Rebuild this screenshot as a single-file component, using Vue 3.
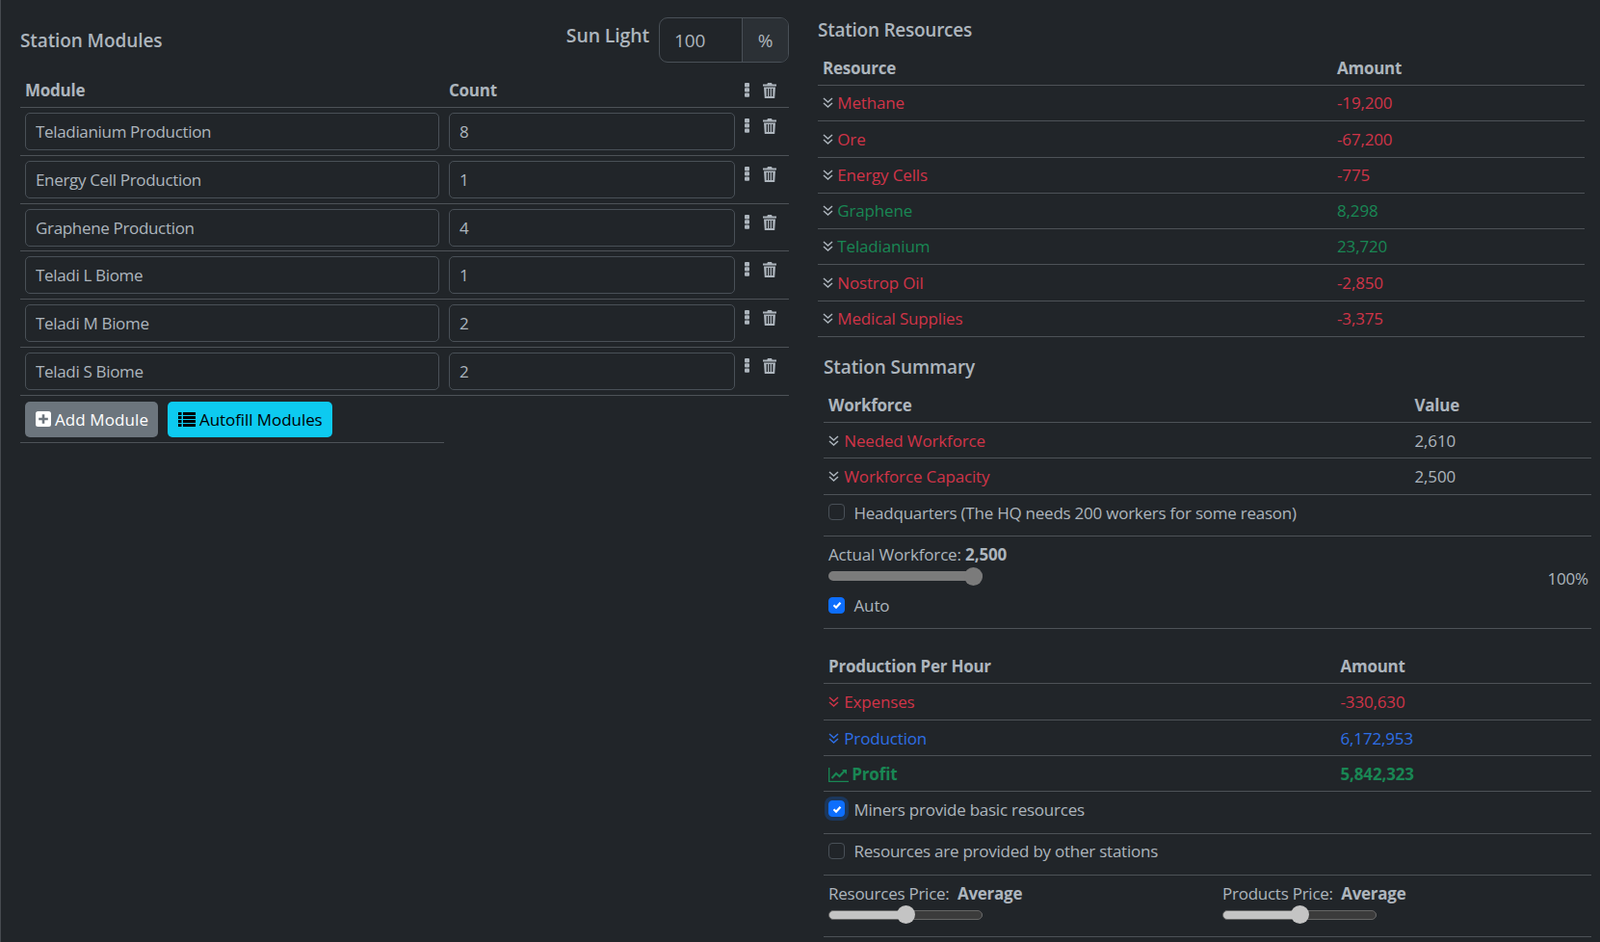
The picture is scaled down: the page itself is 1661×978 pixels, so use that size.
<script setup>
const modules = [
  { name: 'Teladianium Production', count: 8 },
  { name: 'Energy Cell Production', count: 1 },
  { name: 'Graphene Production', count: 4 },
  { name: 'Teladi L Biome', count: 1 },
  { name: 'Teladi M Biome', count: 2 },
  { name: 'Teladi S Biome', count: 2 },
]
const resources = [
  { name: 'Methane', amount: '-19,200', tone: 'red' },
  { name: 'Ore', amount: '-67,200', tone: 'red' },
  { name: 'Energy Cells', amount: '-775', tone: 'red' },
  { name: 'Graphene', amount: '8,298', tone: 'green' },
  { name: 'Teladianium', amount: '23,720', tone: 'green' },
  { name: 'Nostrop Oil', amount: '-2,850', tone: 'red' },
  { name: 'Medical Supplies', amount: '-3,375', tone: 'red' },
]
</script>

<template>
  <div class="page">
    <section class="left">
      <div class="left-head">
        <h5 class="title">Station Modules</h5>
        <div class="sun">
          <label class="sun-label">Sun Light</label>
          <div class="group">
            <input class="group-input" readonly value="100" />
            <span class="group-unit">%</span>
          </div>
        </div>
      </div>
      <table class="table modules">
        <thead>
          <tr class="row-head">
            <th class="c-module">Module</th>
            <th class="c-count">Count</th>
            <th class="c-actions">
              <div class="actions">
                <svg class="dots" viewBox="0 0 5 15" width="5" height="15"><rect width="5" height="4.4" y="0" rx="1" /><rect width="5" height="4.4" y="5.2" rx="1" /><rect width="5" height="4.4" y="10.4" rx="1" /></svg>
                <svg class="trash" viewBox="0 0 14 16" width="14" height="16"><path d="M5 0h4l.7 1.6H14v1.8H0V1.6h4.3zM1 4.4h12L12.2 16H1.8zM3.7 6v8h1.3V6zm2.6 0v8h1.4V6zM9 6v8h1.3V6z" fill-rule="evenodd" /></svg>
              </div>
            </th>
          </tr>
        </thead>
        <tbody>
          <tr v-for="m in modules" :key="m.name" class="row-module">
            <td class="cell-input"><input class="field" readonly :value="m.name" /></td>
            <td class="cell-input"><input class="field" readonly :value="m.count" /></td>
            <td class="cell-actions">
              <div class="actions">
                <svg class="dots" viewBox="0 0 5 15" width="5" height="15"><rect width="5" height="4.4" y="0" rx="1" /><rect width="5" height="4.4" y="5.2" rx="1" /><rect width="5" height="4.4" y="10.4" rx="1" /></svg>
                <svg class="trash" viewBox="0 0 14 16" width="14" height="16"><path d="M5 0h4l.7 1.6H14v1.8H0V1.6h4.3zM1 4.4h12L12.2 16H1.8zM3.7 6v8h1.3V6zm2.6 0v8h1.4V6zM9 6v8h1.3V6z" fill-rule="evenodd" /></svg>
              </div>
            </td>
          </tr>
        </tbody>
      </table>
      <div class="button-row">
        <button class="btn btn-gray">
          <svg viewBox="0 0 16 16" width="16" height="16"><path fill="#fff" fill-rule="evenodd" d="M2.5 0h11A2.5 2.5 0 0 1 16 2.5v11a2.5 2.5 0 0 1-2.5 2.5h-11A2.5 2.5 0 0 1 0 13.500v-11A2.500 2.500 0 0 1 2.500 0zM6.700 3.200v3.500H3.200v2.600h3.500v3.500h2.600V9.300h3.500V6.700H9.300V3.200z" /></svg>
          <span>Add Module</span>
        </button>
        <button class="btn btn-cyan">
          <svg viewBox="0 0 18 15" width="18" height="15"><path d="M0 0h3.500v3H0zM5 0h13v3H5zM0 4h3.500v3H0zM5 4h13v3H5zM0 8h3.500v3H0zM5 8h13v3H5zM0 12h3.500v3H0zM5 12h13v3H5z" /></svg>
          <span>Autofill Modules</span>
        </button>
      </div>
    </section>

    <section class="right">
      <h5 class="title res-title">Station Resources</h5>
      <table class="table resources">
        <thead>
          <tr class="row-std"><th class="c-res">Resource</th><th>Amount</th></tr>
        </thead>
        <tbody>
          <tr v-for="r in resources" :key="r.name" class="row-std" :class="r.tone">
            <td class="c-res">
              <svg class="chev chev-gray" viewBox="0 0 11 11" width="11" height="11"><path d="M1 1l4.500 4 4.500-4M1 6l4.500 4 4.500-4" /></svg>
              {{ r.name }}
            </td>
            <td>{{ r.amount }}</td>
          </tr>
        </tbody>
      </table>

      <div class="summary">
        <h5 class="title sum-title">Station Summary</h5>
        <table class="table workforce">
          <thead>
            <tr class="row-std"><th class="c-work">Workforce</th><th>Value</th></tr>
          </thead>
          <tbody>
            <tr class="row-std">
              <td class="c-work red">
                <svg class="chev chev-gray" viewBox="0 0 11 11" width="11" height="11"><path d="M1 1l4.500 4 4.500-4M1 6l4.500 4 4.500-4" /></svg>
                Needed Workforce
              </td>
              <td>2,610</td>
            </tr>
            <tr class="row-std row-tall">
              <td class="c-work red">
                <svg class="chev chev-gray" viewBox="0 0 11 11" width="11" height="11"><path d="M1 1l4.500 4 4.500-4M1 6l4.500 4 4.500-4" /></svg>
                Workforce Capacity
              </td>
              <td>2,500</td>
            </tr>
            <tr class="row-check">
              <td colspan="2">
                <div class="check-line">
                  <span class="check"></span>
                  <span>Headquarters (The HQ needs 200 workers for some reason)</span>
                </div>
              </td>
            </tr>
            <tr class="row-slider">
              <td colspan="2">
                <div class="slider-wrap">
                  <div class="slider-col">
                    <div class="slider-label">Actual Workforce: <b>2,500</b></div>
                    <input class="range range-full" type="range" min="0" max="100" value="100" />
                    <div class="check-line auto-line">
                      <span class="check on">
                        <svg viewBox="0 0 12 12" width="12" height="12"><path d="M2.500 6.300l2.500 2.400 4.500-5" /></svg>
                      </span>
                      <span>Auto</span>
                    </div>
                  </div>
                  <span class="pct">100%</span>
                </div>
              </td>
            </tr>
          </tbody>
        </table>

        <table class="table production">
          <thead>
            <tr class="row-std"><th class="c-prod">Production Per Hour</th><th>Amount</th></tr>
          </thead>
          <tbody>
            <tr class="row-std row-tall red">
              <td class="c-prod">
                <svg class="chev" viewBox="0 0 11 11" width="11" height="11"><path d="M1 1l4.500 4 4.500-4M1 6l4.500 4 4.500-4" /></svg>
                Expenses
              </td>
              <td>-330,630</td>
            </tr>
            <tr class="row-std blue">
              <td class="c-prod">
                <svg class="chev" viewBox="0 0 11 11" width="11" height="11"><path d="M1 1l4.500 4 4.500-4M1 6l4.500 4 4.500-4" /></svg>
                Production
              </td>
              <td>6,172,953</td>
            </tr>
            <tr class="row-std green strong">
              <td class="c-prod">
                <svg class="graph" viewBox="0 0 21 15" width="21" height="15"><path d="M.7 0v14.300H21" fill="none" stroke="currentColor" stroke-width="1.300" /><path d="M3.500 11l4.500-5 3.500 3L17 3" fill="none" stroke="currentColor" stroke-width="2" /><path d="M14 2h5v5z" fill="currentColor" /></svg>
                Profit
              </td>
              <td>5,842,323</td>
            </tr>
            <tr class="row-miners">
              <td colspan="2">
                <div class="check-line">
                  <span class="check on focus">
                    <svg viewBox="0 0 12 12" width="12" height="12"><path d="M2.500 6.300l2.500 2.400 4.500-5" /></svg>
                  </span>
                  <span>Miners provide basic resources</span>
                </div>
              </td>
            </tr>
            <tr class="row-check">
              <td colspan="2">
                <div class="check-line">
                  <span class="check"></span>
                  <span>Resources are provided by other stations</span>
                </div>
              </td>
            </tr>
            <tr class="row-price">
              <td colspan="2">
                <div class="prices">
                  <div>
                    <div class="slider-label">Resources Price:&nbsp; <b>Average</b></div>
                    <input class="range range-half" type="range" min="0" max="100" value="50" />
                  </div>
                  <div>
                    <div class="slider-label">Products Price:&nbsp; <b>Average</b></div>
                    <input class="range range-half" type="range" min="0" max="100" value="50" />
                  </div>
                </div>
              </td>
            </tr>
          </tbody>
        </table>
      </div>
    </section>
  </div>
</template>

<style>
html, body { margin: 0; background: #212529; }
</style>

<style scoped>
.page {
  display: flex;
  box-sizing: border-box;
  height: 978px;
  overflow: hidden;
  background: #212529;
  border-left: 1px solid #464a4f;
  font-family: "Open Sans", "Noto Sans", sans-serif;
  font-size: 17px;
  letter-spacing: -0.15px;
  color: #adb5bd;
}
.left { width: 798px; margin-left: 20px; }
.right { width: 796px; margin-left: 30px; padding-top: 17px; }
.title { margin: 0; font-size: 19px; font-weight: 600; line-height: 28px; color: #adb5bd; letter-spacing: -0.1px; }
.left-head { display: flex; justify-content: space-between; align-items: center; padding-top: 18px; height: 47px; margin-bottom: 9px; }
.sun { display: flex; align-items: center; gap: 10px; }
.sun-label { font-weight: 600; font-size: 19.500px; padding-bottom: 10px; }
.group { display: flex; width: 135px; height: 47px; box-sizing: border-box; border: 1px solid #495057; border-radius: 9px; overflow: hidden; }
.group-input { width: 86px; box-sizing: border-box; padding: 0 15px; background: transparent; border: 0; border-right: 1px solid #495057; font: inherit; font-size: 19px; letter-spacing: inherit; color: #adb5bd; outline: none; }
.group-unit { flex: 1; display: flex; align-items: center; justify-content: center; background: #2b3035; font-size: 19px; }
.table { border-collapse: collapse; table-layout: fixed; width: 100%; }
th { font-weight: 700; text-align: left; padding: 2px 5px 0; letter-spacing: -0.25px; }
td { padding: 1px 5px 0; }
tr { border-bottom: 1px solid #4d5257; }
.row-head { height: 37px; }
.c-module { width: 430px; }
.c-count { width: 297px; }
.c-actions { padding: 12px 0 0; vertical-align: top; }
.row-module { height: 50px; }
.modules tbody tr:nth-child(3) { height: 49px; }
.cell-input { vertical-align: middle; }
.cell-actions { padding: 11px 0 0; vertical-align: top; }
.actions { display: flex; gap: 14px; padding-left: 5px; }
.dots, .trash { fill: #adb5bd; display: block; }
.field { display: block; width: 100%; box-sizing: border-box; height: 39px; padding: 0 10px; background: transparent; border: 1px solid #495057; border-radius: 5px; font: inherit; letter-spacing: -0.33px; color: #adb5bd; outline: none; }
.button-row { display: flex; gap: 10px; padding: 6px 5px 5px; width: 430px; border-bottom: 1px solid #4d5257; }
.btn { display: flex; align-items: center; gap: 4px; height: 37px; padding: 0 0 0 11px; border: 0; border-radius: 5px; font: inherit; white-space: nowrap; }
.btn-gray { background: #6c757d; color: #fff; width: 138px; letter-spacing: 0.1px; }
.btn-cyan { background: #0dcaf0; color: #000; width: 171px; letter-spacing: -0.07px; }
.res-title { margin-bottom: 6px; line-height: 28px; letter-spacing: -0.25px; }
.c-res { width: 524px; }
.row-std { height: 37px; }
.resources tbody tr:nth-child(2), .resources tbody tr:nth-child(6) { height: 38px; }
.resources td { padding-top: 0; }
.row-tall { height: 38px; }
.workforce .row-tall td { padding-bottom: 2px; }
.row-std td, .row-std th { vertical-align: middle; }
.red { color: #d03448; }
.green { color: #198754; }
.blue { color: #2e6fe6; }
.strong td { font-weight: 700; }
.chev { fill: none; stroke: currentColor; stroke-width: 1.500px; margin-right: 1px; vertical-align: 1px; }
.c-res .chev { margin-right: 0; }
.chev-gray { color: #adb5bd; }
.graph { vertical-align: -2px; margin-right: -1px; }
.summary { margin-left: 6px; width: 797px; }
.sum-title { margin-top: 17px; margin-bottom: 7px; line-height: 28px; }
.c-work { width: 598.500px; }
.row-check { height: 43px; }
.row-check td, .row-miners td { padding: 0 5px 6px; }
.check-line { display: flex; align-items: center; gap: 9.500px; letter-spacing: -0.24px; }
.check { display: flex; align-items: center; justify-content: center; width: 17px; height: 17px; box-sizing: border-box; border: 1px solid #495057; border-radius: 4px; margin-top: -1px; }
.check.on { background: #0d6efd; border-color: #0d6efd; }
.check.focus { box-shadow: 0 0 0 4px rgba(13, 110, 253, 0.25); }
.check svg { fill: none; stroke: #fff; stroke-width: 2.200px; }
.row-slider { height: 96px; }
.slider-wrap { display: flex; justify-content: space-between; align-items: center; }
.slider-col { padding-bottom: 6px; }
.slider-label { line-height: 24px; }
.slider-label b { font-weight: 700; }
.range { display: block; appearance: none; -webkit-appearance: none; width: 160px; height: 10px; margin: 5px 0 0; border-radius: 5px; outline: none; }
.range::-webkit-slider-thumb { -webkit-appearance: none; appearance: none; width: 19px; height: 19px; border-radius: 50%; border: 0; }
.range-full { background: #7b7b7b; }
.range-full::-webkit-slider-thumb { background: #7b7b7b; }
.range-half { box-sizing: border-box; background: linear-gradient(90deg, #c4c4c4 50%, #3b3b3b 50%); border: 1px solid #666; }
.range-half::-webkit-slider-thumb { background: #c4c4c4; }
.auto-line { margin-top: 14px; letter-spacing: -0.15px; }
.pct { padding-bottom: 9px; margin-right: -2px; }
.production { margin-top: 19px; }
.c-prod { width: 521.500px; }
.row-miners { height: 44px; }
.row-price { height: 64px; }
.row-price td { padding: 0 5px 10px; }
.prices { display: grid; grid-template-columns: 409px 1fr; letter-spacing: -0.25px; }
</style>
